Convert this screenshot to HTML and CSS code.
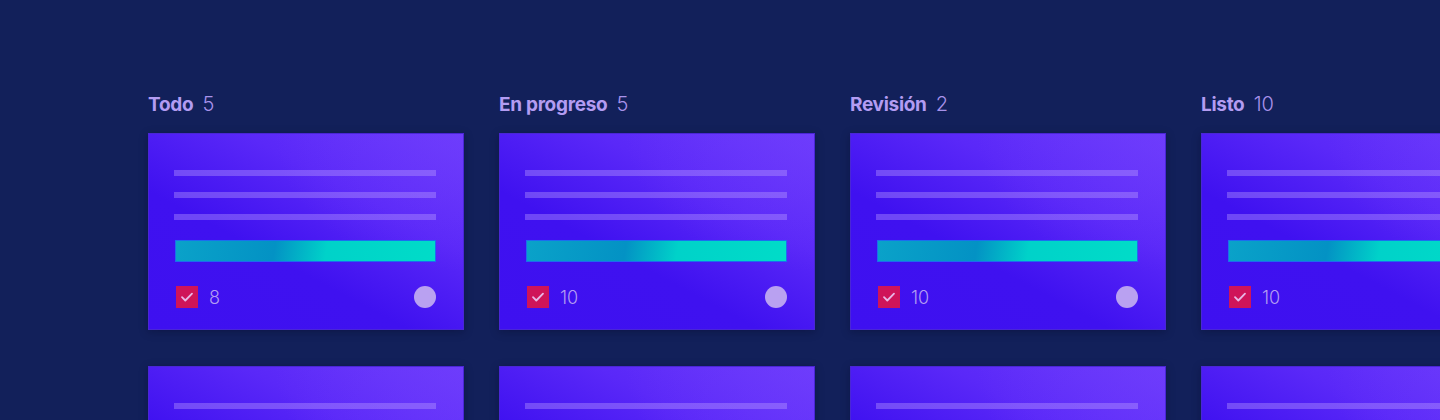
FILE: index.html
```html
<!DOCTYPE html>
<html lang="es">
<head>
<meta charset="utf-8">
<title>Tablero</title>
<link rel="stylesheet" href="styles.css">
</head>
<body>
<main class="board">
  <section class="column">
    <h2 class="column-title">Todo <span class="count">5</span></h2>
    <div class="card">
      <div class="lines"><span class="line"></span><span class="line"></span><span class="line"></span></div>
      <div class="progress"></div>
      <div class="card-foot">
        <span class="check"><svg viewBox="0 0 22 22"><path d="M6 11.2l3.3 3.3 6.7-6.8"/></svg></span>
        <span class="num">8</span>
        <span class="avatar"></span>
      </div>
    </div>
    <div class="card">
      <div class="lines"><span class="line"></span><span class="line"></span><span class="line"></span></div>
    </div>
  </section>
  <section class="column">
    <h2 class="column-title">En progreso <span class="count">5</span></h2>
    <div class="card">
      <div class="lines"><span class="line"></span><span class="line"></span><span class="line"></span></div>
      <div class="progress"></div>
      <div class="card-foot">
        <span class="check"><svg viewBox="0 0 22 22"><path d="M6 11.2l3.3 3.3 6.7-6.8"/></svg></span>
        <span class="num">10</span>
        <span class="avatar"></span>
      </div>
    </div>
    <div class="card">
      <div class="lines"><span class="line"></span><span class="line"></span><span class="line"></span></div>
    </div>
  </section>
  <section class="column">
    <h2 class="column-title">Revisión <span class="count">2</span></h2>
    <div class="card">
      <div class="lines"><span class="line"></span><span class="line"></span><span class="line"></span></div>
      <div class="progress"></div>
      <div class="card-foot">
        <span class="check"><svg viewBox="0 0 22 22"><path d="M6 11.2l3.3 3.3 6.7-6.8"/></svg></span>
        <span class="num">10</span>
        <span class="avatar"></span>
      </div>
    </div>
    <div class="card">
      <div class="lines"><span class="line"></span><span class="line"></span><span class="line"></span></div>
    </div>
  </section>
  <section class="column">
    <h2 class="column-title">Listo <span class="count">10</span></h2>
    <div class="card">
      <div class="lines"><span class="line"></span><span class="line"></span><span class="line"></span></div>
      <div class="progress"></div>
      <div class="card-foot">
        <span class="check"><svg viewBox="0 0 22 22"><path d="M6 11.2l3.3 3.3 6.7-6.8"/></svg></span>
        <span class="num">10</span>
        <span class="avatar"></span>
      </div>
    </div>
    <div class="card">
      <div class="lines"><span class="line"></span><span class="line"></span><span class="line"></span></div>
    </div>
  </section>
</main>
</body>
</html>
```
FILE: styles.css
```css
html, body {
  margin: 0;
  height: 100%;
}

body {
  background: #12205a;
  font-family: Inter, "Noto Sans", "Liberation Sans", sans-serif;
  color: #b39cf2;
  overflow: hidden;
}

.board {
  display: flex;
  gap: 35px;
  padding: 91px 0 0 148px;
}

.column {
  flex: 0 0 316px;
  display: flex;
  flex-direction: column;
  gap: 36px;
}

.column-title {
  margin: 0 0 -20px;
  height: 26px;
  font-size: 19px;
  line-height: 26px;
  font-weight: 700;
  letter-spacing: -0.3px;
  color: #b39cf2;
}

.count {
  margin-left: 5px;
  font-size: 20px;
  font-weight: 300;
  letter-spacing: 0;
  color: #a892ea;
}

.card {
  box-sizing: border-box;
  height: 197px;
  padding: 36px 27px 0 25px;
  border: 1px solid #4a26d6;
  background:
    radial-gradient(ellipse 60% 70% at 100% 0%, rgba(112, 62, 252, 0.55), rgba(112, 62, 252, 0) 100%),
    linear-gradient(28deg, #3e10f0 0%, #3f11f0 38%, #5a28f8 68%, #6b3afb 100%);
  box-shadow: 0 2px 8px rgba(6, 10, 40, 0.35);
}

.lines {
  display: flex;
  flex-direction: column;
  gap: 16px;
}

.line {
  display: block;
  height: 6px;
  background: rgba(190, 160, 255, 0.38);
}

.progress {
  box-sizing: border-box;
  height: 22px;
  margin: 20px 0 0 1px;
  border: 1px solid #1c6cf0;
  background: linear-gradient(100deg, #0aa2c9 0%, #0392c4 38%, #00d2c9 58%, #00dcc8 100%);
}

.card-foot {
  display: flex;
  align-items: center;
  margin-top: 24px;
  padding-left: 2px;
}

.check {
  width: 22px;
  height: 22px;
  background: #cf1459;
  display: flex;
}

.check svg {
  width: 22px;
  height: 22px;
  fill: none;
  stroke: #e8b6e6;
  stroke-width: 1.8;
  stroke-linecap: round;
  stroke-linejoin: round;
}

.num {
  margin-left: 11px;
  font-size: 18px;
  font-weight: 300;
  color: #b39cf2;
}

.avatar {
  margin-left: auto;
  width: 22px;
  height: 22px;
  border-radius: 50%;
  background: #b9a1f1;
}
```
